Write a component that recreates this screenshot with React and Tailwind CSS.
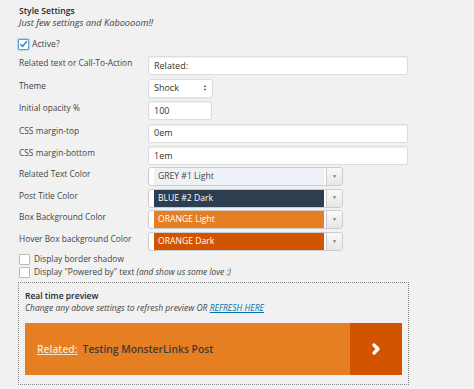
import { ChevronRight } from "lucide-react";

const FONT = { fontFamily: '"Open Sans", "Liberation Sans", sans-serif' };

function Label({ children }) {
  return <div className="w-[129px] shrink-0 pt-[1px] text-[8.4px] text-[#444]">{children}</div>;
}

function TextRow({ label, value, width = "w-[260px]", h = "h-[22.5px]" }) {
  return (
    <div className={`flex items-start ${h}`}>
      <Label>{label}</Label>
      <div
        className={`${width} h-[19px] bg-white border border-[#ddd] rounded-[2px] px-[5px] flex items-center text-[9px] text-[#333] shadow-[inset_0_1px_2px_rgba(0,0,0,0.07)]`}
      >
        {value}
      </div>
    </div>
  );
}

function ColorRow({ label, value, bg, fg }) {
  return (
    <div className="flex items-start h-[21.7px]">
      <Label>{label}</Label>
      <div className="w-[195px] h-[19px] flex items-stretch bg-white border border-[#ccc] rounded-[3px]">
        <div className="w-[5px]" />
        <div
          className="flex-1 flex items-center pl-[4px] text-[8.6px]"
          style={{ background: bg, color: fg }}
        >
          {value}
        </div>
        <div className="w-[2px]" />
        <div className="w-[16px] border-l border-[#ccc] bg-gradient-to-b from-[#fafafa] to-[#e6e6e6] rounded-r-[3px] flex items-center justify-center">
          <span className="text-[5px] text-[#777]">▼</span>
        </div>
      </div>
    </div>
  );
}

function Box({ checked }) {
  return (
    <div
      className={`w-[11px] h-[11px] bg-white border rounded-[1px] flex items-center justify-center ${
        checked ? "border-[#5b9dd9] shadow-[0_0_2px_rgba(30,140,190,0.8)]" : "border-[#bbb]"
      }`}
    >
      {checked && (
        <svg width="10" height="10" viewBox="0 0 10 10">
          <path d="M1.5 5.2 L4 7.6 L8.6 2" fill="none" stroke="#1e8cbe" strokeWidth="1.6" />
        </svg>
      )}
    </div>
  );
}

export default function App() {
  return (
    <div className="w-[474px] h-[389px] bg-[#f1f1f1] overflow-hidden" style={FONT}>
      <div className="pl-[19px] pt-[5px]">
        <div className="text-[8.6px] font-semibold text-[#23282d] leading-[12px]">Style Settings</div>
        <div className="text-[9.2px] italic text-[#444] leading-[12px]">Just few settings and Kaboooom!!</div>

        <div className="flex items-center gap-[3px] mt-[9px] -ml-[1px] h-[12px]">
          <Box checked />
          <span className="text-[8.6px] text-[#444]">Active?</span>
        </div>

        <div className="mt-[6px]">
          <TextRow label="Related text or Call-To-Action" value="Related:" />
          <div className="flex items-start h-[22.5px]">
            <Label>Theme</Label>
            <div className="w-[65px] h-[19px] bg-white border border-[#ddd] rounded-[3px] px-[5px] flex items-center justify-between text-[9px] text-[#333] shadow-[0_1px_1px_rgba(0,0,0,0.05)]">
              <span>Shock</span>
              <span className="flex flex-col text-[4px] leading-[4px] text-[#555]">
                <span>▲</span>
                <span>▼</span>
              </span>
            </div>
          </div>
          <TextRow label="Initial opacity %" value="100" width="w-[64px]" />
          <TextRow label="CSS margin-top" value="0em" />
          <TextRow label="CSS margin-bottom" value="1em" h="h-[21px]" />
          <ColorRow label="Related Text Color" value="GREY #1 Light" bg="#eef1f5" fg="#444" />
          <ColorRow label="Post Title Color" value="BLUE #2 Dark" bg="#2c3e50" fg="#fff" />
          <ColorRow label="Box Background Color" value="ORANGE Light" bg="#e67e22" fg="#fff" />
          <ColorRow label="Hover Box background Color" value="ORANGE Dark" bg="#d35400" fg="#fff" />
        </div>

        <div className="flex items-center gap-[4px] -mt-[1px] h-[13px]">
          <Box />
          <span className="text-[8.4px] text-[#444]">Display border shadow</span>
        </div>
        <div className="flex items-center gap-[4px] h-[13px]">
          <Box />
          <span className="text-[8.4px] text-[#444]">
            Display "Powered by" text <i>(and show us some love :)</i>
          </span>
        </div>

        <div className="mt-[3px] -ml-[1px] w-[391px] h-[103px] border border-dotted border-[#888] px-[6px] pt-[7px]">
          <div className="text-[8.5px] font-semibold text-[#23282d] leading-[12px]">Real time preview</div>
          <div className="text-[8.5px] italic text-[#444] leading-[12px]">
            Change any above settings to refresh preview OR{" "}
            <span className="text-[#0073aa] underline">REFRESH HERE</span>
          </div>
          <div className="mt-[9px] h-[52px] w-[377px] flex bg-[#e67e22]">
            <div className="flex-1 flex items-center pl-[12px] pt-[1px] text-[10.3px] font-semibold">
              <span className="text-[#f6e4cc] underline">Related:</span>
              <span className="ml-[5px] text-[#3b3b3b]">Testing MonsterLinks Post</span>
            </div>
            <div className="w-[52px] bg-[#d35400] flex items-center justify-center">
              <ChevronRight size={16} strokeWidth={5} color="#fff" />
            </div>
          </div>
        </div>
      </div>
    </div>
  );
}
